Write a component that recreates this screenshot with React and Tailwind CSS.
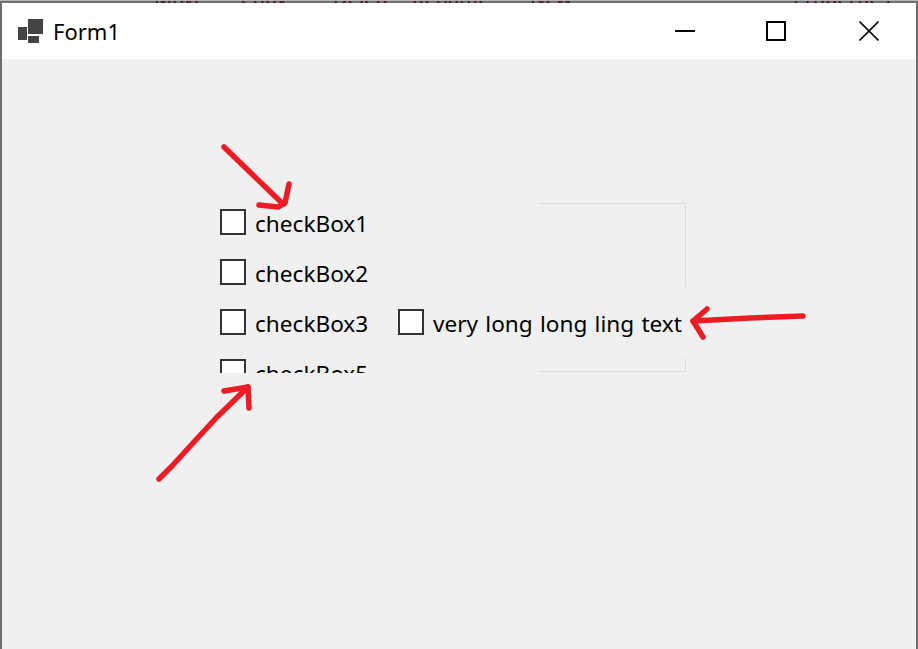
import React from "react";

function Check({ label }) {
  return (
    <div className="flex h-[26px] items-center gap-[9px]">
      <span className="h-[26px] w-[26px] shrink-0 border-2 border-[#333333] bg-white" />
      <span className="mt-[4px] whitespace-nowrap text-[22.6px] leading-[26px] text-black [word-spacing:1.4px]">{label}</span>
    </div>
  );
}

function TitleIcon() {
  return (
    <svg width="26" height="26" viewBox="0 0 26 26" className="shrink-0" style={{ filter: "blur(0.5px)" }}>
      <rect x="10" y="0" width="15" height="15" fill="#444444" />
      <rect x="0" y="8" width="9" height="13" fill="#444444" />
      <rect x="10" y="17" width="11" height="7" fill="#444444" />
    </svg>
  );
}

export default function App() {
  return (
    <div className="relative flex h-[649px] w-[918px] flex-col overflow-hidden bg-[#f0f0f0] font-['Noto_Sans','Open_Sans',sans-serif]">
      {/* sliver of the window behind */}
      <div className="flex h-[3px] shrink-0 items-start overflow-hidden border-t border-[#b5b5b5] bg-[#727272] text-[20px] leading-[20px] text-[#3a1026]">
        <div className="-mt-[13px] flex whitespace-nowrap">
          <span className="ml-[154px] w-[86px]">Move</span>
          <span className="w-[93px]">Copy</span>
          <span className="w-[79px]">Delete</span>
          <span className="w-[118px]">Rename</span>
          <span className="w-[263px]">New</span>
          <span>Properties</span>
        </div>
      </div>

      <div className="flex min-h-0 flex-1 flex-col border-x-2 border-[#6e6e6e]">
        {/* title bar */}
        <div className="flex h-[56px] shrink-0 items-center bg-white">
          <div className="ml-[16px] mt-[2px] flex items-center gap-[9px]">
            <TitleIcon />
            <span className="-mt-[2px] text-[22px] leading-[26px] text-black">Form1</span>
          </div>
          <div className="ml-auto flex h-full">
            <div className="flex h-full w-[90px] items-center justify-center">
              <svg width="20" height="20" viewBox="0 0 20 20"><path d="M0 10H20" stroke="#000" strokeWidth="2" /></svg>
            </div>
            <div className="flex h-full w-[92px] items-center justify-center">
              <svg width="20" height="20" viewBox="0 0 20 20"><rect x="1" y="1" width="18" height="18" fill="none" stroke="#000" strokeWidth="2" /></svg>
            </div>
            <div className="flex h-full w-[94px] items-center justify-center">
              <svg width="20" height="20" viewBox="0 0 20 20"><path d="M0.5 0.5L19.5 19.5M19.5 0.5L0.5 19.5" stroke="#111" strokeWidth="1.7" /></svg>
            </div>
          </div>
        </div>

        {/* client area */}
        <div className="flex-1 bg-[#f0f0f0] pl-[218px] pt-[144px]">
          <div className="relative grid h-[170px] w-[466px] grid-cols-[178px_1fr] overflow-hidden">
            <div className="absolute bottom-[1px] right-0 top-0 w-[148px] border-y border-r border-[#dcdcdc]" />
            <div className="flex flex-col gap-[24px] pt-[6px]">
              <Check label="checkBox1" />
              <Check label="checkBox2" />
              <Check label="checkBox3" />
              <Check label="checkBox5" />
            </div>
            <div className="relative mt-[84px] h-[71px] bg-[#f0f0f0] pt-[22px]">
              <Check label="very long long ling text" />
            </div>
          </div>
        </div>
      </div>

      {/* hand-drawn annotation arrows */}
      <svg className="pointer-events-none absolute left-0 top-0" width="918" height="649" viewBox="0 0 918 649" fill="none" stroke="#ed1c24" strokeWidth="5.5" strokeLinecap="round" strokeLinejoin="round">
        <path d="M224 147L283 204" />
        <path d="M289 184L285 203L278 207L259 205" />
        <path d="M159 479L172 466L193 443L217 417L248 387" />
        <path d="M224 391L248 387L249 408" />
        <path d="M803 316L750 318L693 321" />
        <path d="M707 309L693 321L703 337" />
      </svg>
    </div>
  );
}
